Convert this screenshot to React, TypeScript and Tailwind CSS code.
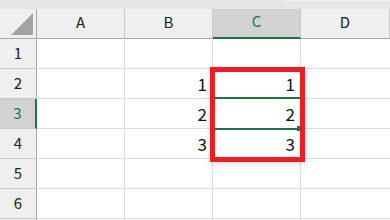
import React from 'react';

const cols = ['A', 'B', 'C', 'D'];
const rows: { n: number; label: string; b?: string; c?: string }[] = [
  { n: 1, label: '1' },
  { n: 2, label: '2', b: '1', c: '1' },
  { n: 3, label: '3', b: '2', c: '2' },
  { n: 4, label: '4', b: '3', c: '3' },
  { n: 5, label: '5' },
  { n: 6, label: '6' },
  // row 7 is only a sliver at the bottom edge
  { n: 7, label: '' },
];

const font = { fontFamily: '"Noto Sans CJK JP", "Noto Sans", sans-serif' };

const App: React.FC = () => {
  return (
    <div className="relative w-[390px] h-[220px] overflow-hidden bg-white" style={font}>
      {/* ribbon strip */}
      <div className="flex h-[9px] bg-[#e6e6e6]">
        <div className="flex-1" />
        <div className="w-[107px] h-[1px] bg-[#f2f2f2]" />
      </div>

      <div className="grid grid-cols-[37px_88px_88px_88px_89px]">
        {/* header row */}
        <div className="relative h-[30px] bg-[#efefef] border-r border-b border-[#a8a8a8]">
          <svg className="absolute left-[11px] top-[4px]" width="23" height="23" viewBox="0 0 23 23">
            <polygon points="0,22 22,0 22,22" fill="#a3a3a3" />
          </svg>
        </div>
        {cols.map((c) => (
          <div
            key={c}
            className={
              c === 'C'
                ? 'h-[30px] flex items-center justify-center pb-[4px] bg-[#d2d2d2] text-[#217346] text-[15px] border-r border-[#c8c8c8] border-b-2 border-b-[#217346]'
                : 'h-[30px] flex items-center justify-center pb-[3px] bg-[#efefef] text-[#222] text-[15px] border-r border-[#c8c8c8] border-b border-b-[#a8a8a8]'
            }
          >
            {c}
          </div>
        ))}

        {rows.map((r) => (
          <React.Fragment key={r.n}>
            <div
              className={
                r.n === 3
                  ? 'h-[30px] flex items-center justify-center pb-[1px] bg-[#d2d2d2] text-[#217346] text-[15px] border-b border-[#c8c8c8] border-r-2 border-r-[#217346]'
                  : 'h-[30px] flex items-center justify-center pb-[1px] bg-[#efefef] text-[#222] text-[15px] border-b border-[#c8c8c8] border-r border-r-[#a8a8a8]'
              }
            >
              {r.label}
            </div>
            <div className="h-[30px] border-r border-b border-[#dcdcdc]" />
            <div className="h-[30px] flex items-center justify-end pr-[5px] text-[17px] text-[#111] border-r border-b border-[#dcdcdc]">
              {r.b}
            </div>
            <div className="h-[30px] flex items-center justify-end pr-[5px] text-[17px] text-[#111] border-r border-b border-[#dcdcdc]">
              {r.c}
            </div>
            <div className="h-[30px] border-b border-[#dcdcdc]" />
          </React.Fragment>
        ))}
      </div>

      {/* active cell C3 */}
      <div className="absolute left-[212px] top-[97px] w-[89px] h-[33px] border-y-2 border-[#217346]" />
      <div className="absolute left-[297px] top-[126px] w-[4px] h-[5px] bg-[#217346]" />

      {/* red highlight box */}
      <div className="absolute left-[210px] top-[67px] w-[95px] h-[95px] border-[5px] border-[#ee1c25] shadow-[0_2px_6px_rgba(0,0,0,0.12)]" />
    </div>
  );
};

export default App;
